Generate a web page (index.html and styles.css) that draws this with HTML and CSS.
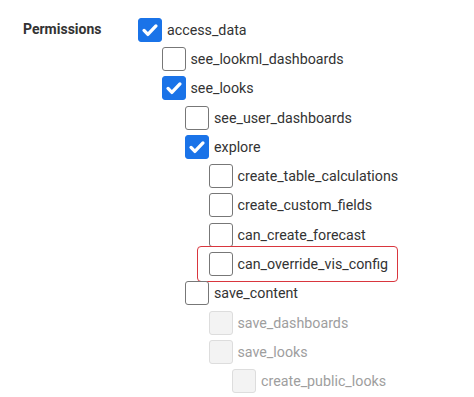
FILE: index.html
```html
<!DOCTYPE html>
<html>
<head>
<meta charset="utf-8">
<link rel="stylesheet" href="styles.css">
</head>
<body>
<div class="page">
  <div class="label">Permissions</div>
  <ul class="tree">
    <li class="row l0"><span class="box checked"><svg viewBox="0 0 24 24"><path d="M5.5 12.5l4.2 4.3L18.5 7.5"/></svg></span><span class="txt">access_data</span></li>
    <li class="row l1"><span class="box"></span><span class="txt">see_lookml_dashboards</span></li>
    <li class="row l1"><span class="box checked"><svg viewBox="0 0 24 24"><path d="M5.5 12.5l4.2 4.3L18.5 7.5"/></svg></span><span class="txt">see_looks</span></li>
    <li class="row l2"><span class="box"></span><span class="txt">see_user_dashboards</span></li>
    <li class="row l2"><span class="box checked"><svg viewBox="0 0 24 24"><path d="M5.5 12.5l4.2 4.3L18.5 7.5"/></svg></span><span class="txt">explore</span></li>
    <li class="row l3"><span class="box"></span><span class="txt">create_table_calculations</span></li>
    <li class="row l3"><span class="box"></span><span class="txt">create_custom_fields</span></li>
    <li class="row l3"><span class="box"></span><span class="txt">can_create_forecast</span></li>
    <li class="row l3 marked"><span class="box"></span><span class="txt">can_override_vis_config</span><span class="highlight"></span></li>
    <li class="row l2"><span class="box"></span><span class="txt">save_content</span></li>
    <li class="row l3 disabled"><span class="box"></span><span class="txt">save_dashboards</span></li>
    <li class="row l3 disabled"><span class="box"></span><span class="txt">save_looks</span></li>
    <li class="row l4 disabled"><span class="box"></span><span class="txt">create_public_looks</span></li>
  </ul>
</div>
</body>
</html>
```

FILE: styles.css
```css
html, body {
  margin: 0;
  padding: 0;
  background: #ffffff;
}
.page {
  display: flex;
  padding: 15px 0 0 23px;
  font-family: Roboto, "Liberation Sans", sans-serif;
  color: #333333;
}
.label {
  width: 115px;
  font-size: 14px;
  font-weight: 700;
  line-height: 29.3px;
  color: #333;
}
.tree {
  list-style: none;
  margin: 0;
  padding: 0;
}
.row {
  position: relative;
  display: flex;
  align-items: center;
  height: 29.3px;
  font-size: 14.25px;
}
.l0 { margin-left: 0; }
.l1 { margin-left: 23.5px; }
.l2 { margin-left: 47px; }
.l3 { margin-left: 70.5px; }
.l4 { margin-left: 94px; }
.box {
  box-sizing: border-box;
  width: 24px;
  height: 24px;
  border: 1px solid #777777;
  border-radius: 3px;
  background: #fff;
  flex: none;
  display: flex;
  align-items: center;
  justify-content: center;
}
.box.checked {
  background: #1a73e8;
  border-color: #1a73e8;
}
.box svg {
  width: 22px;
  height: 22px;
}
.box svg path {
  fill: none;
  stroke: #fff;
  stroke-width: 3.6;
  stroke-linecap: round;
  stroke-linejoin: round;
}
.txt {
  margin-left: 5px;
  white-space: nowrap;
}
.disabled .box {
  background: #f3f3f3;
  border-color: #dddddd;
}
.disabled .txt {
  color: #9e9e9e;
}
.highlight {
  position: absolute;
  left: -12px;
  top: -3px;
  width: 201px;
  height: 36px;
  box-sizing: border-box;
  border: 1.5px solid #d9363e;
  border-radius: 4px;
  pointer-events: none;
}
```
